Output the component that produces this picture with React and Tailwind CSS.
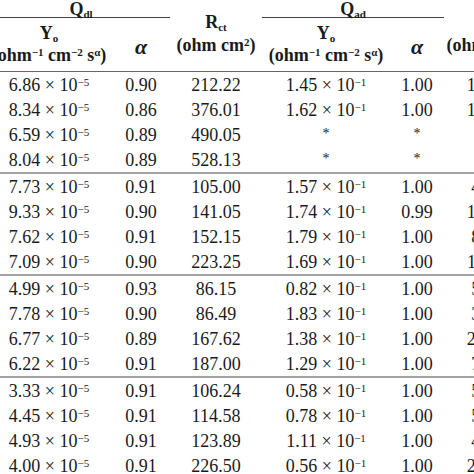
const groups = [
  [
    ["6.86", "5", "0.90", "212.22", "1.45", "1", "1.00", "135.20"],
    ["8.34", "5", "0.86", "376.01", "1.62", "1", "1.00", "148.70"],
    ["6.59", "5", "0.89", "490.05", null, null, "*", "*"],
    ["8.04", "5", "0.89", "528.13", null, null, "*", "*"],
  ],
  [
    ["7.73", "5", "0.91", "105.00", "1.57", "1", "1.00", "45.12"],
    ["9.33", "5", "0.90", "141.05", "1.74", "1", "0.99", "126.30"],
    ["7.62", "5", "0.91", "152.15", "1.79", "1", "1.00", "86.45"],
    ["7.09", "5", "0.90", "223.25", "1.69", "1", "1.00", "112.80"],
  ],
  [
    ["4.99", "5", "0.93", "86.15", "0.82", "1", "1.00", "52.30"],
    ["7.78", "5", "0.90", "86.49", "1.83", "1", "1.00", "38.40"],
    ["6.77", "5", "0.89", "167.62", "1.38", "1", "1.00", "245.10"],
    ["6.22", "5", "0.91", "187.00", "1.29", "1", "1.00", "72.60"],
  ],
  [
    ["3.33", "5", "0.91", "106.24", "0.58", "1", "1.00", "56.20"],
    ["4.45", "5", "0.91", "114.58", "0.78", "1", "1.00", "54.80"],
    ["4.93", "5", "0.91", "123.89", "1.11", "1", "1.00", "47.30"],
    ["4.00", "5", "0.91", "226.50", "0.56", "1", "1.00", "236.20"],
  ],
];

const cols = "grid grid-cols-[142px_42px_108px_112px_70px_72px]";

function Star() {
  return <span className="text-[14px] relative -top-[3px]">*</span>;
}

function Sci({ m, e }) {
  if (m === null) return <Star />;
  return (
    <span>
      {m} × 10<sup className="text-[11px]">−{e}</sup>
    </span>
  );
}

function Units() {
  return (
    <span>
      (ohm<sup className="text-[11px]">−1</sup> cm<sup className="text-[11px]">−2</sup> s
      <sup className="text-[11px]">α</sup>)
    </span>
  );
}

export default function App() {
  return (
    <div
      className="w-[474px] h-[474px] overflow-hidden bg-white text-[#1a1a1a]"
      style={{ fontFamily: '"Liberation Serif", "Times New Roman", serif' }}
    >
      <div className="ml-[-22px] w-[546px] text-[18px]">
        <div className={`${cols} grid-rows-[18px_53px] font-bold whitespace-nowrap`}>
          <div className="col-span-2 row-start-1">
            <div className="ml-[14px] mr-[-8px] h-[18px] border-b border-[#444] text-center leading-[18px]">
              Q<sub className="text-[11px]">dl</sub>
            </div>
          </div>
          <div className="col-start-3 row-start-1 row-span-2 flex flex-col items-center pt-[11px] leading-[23px]">
            <div>
              R<sub className="text-[11px]">ct</sub>
            </div>
            <div>
              (ohm cm<sup className="text-[11px]">2</sup>)
            </div>
          </div>
          <div className="col-start-4 col-span-2 row-start-1">
            <div className="ml-[-8px] mr-[8px] h-[18px] border-b border-[#444] text-center leading-[18px]">
              Q<sub className="text-[11px]">ad</sub>
            </div>
          </div>
          <div className="col-start-6 row-start-1 row-span-2 flex flex-col items-center pt-[34px] leading-[23px] ml-[-4px]">
            <div>
              (ohm cm<sup className="text-[11px]">2</sup>)
            </div>
          </div>
          <div className="col-start-1 row-start-2 flex flex-col items-center pt-[4px] leading-[22px]">
            <div>
              Y<sub className="text-[11px]">o</sub>
            </div>
            <Units />
          </div>
          <div className="col-start-2 row-start-2 flex items-center justify-center pt-[4px] text-[22px] italic">
            α
          </div>
          <div className="col-start-4 row-start-2 flex flex-col items-center pt-[4px] leading-[22px]">
            <div>
              Y<sub className="text-[11px]">o</sub>
            </div>
            <Units />
          </div>
          <div className="col-start-5 row-start-2 flex items-center justify-center pt-[4px] text-[22px] italic">
            α
          </div>
        </div>
        <div className="h-px bg-[#666]" />
        {groups.map((g, gi) => (
          <div key={gi}>
            {gi > 0 && <div className="h-[2px] bg-[#a3a3a3]" />}
            {g.map((r, ri) => (
              <div key={ri} className={`${cols} h-[25px] items-center text-center whitespace-nowrap`}>
                <div>
                  <Sci m={r[0]} e={r[1]} />
                </div>
                <div>{r[2]}</div>
                <div>{r[3]}</div>
                <div>
                  <Sci m={r[4]} e={r[5]} />
                </div>
                <div>{r[6] === "*" ? <Star /> : r[6]}</div>
                <div className="pl-[7px]">{r[7] === "*" ? <Star /> : r[7]}</div>
              </div>
            ))}
          </div>
        ))}
      </div>
    </div>
  );
}
